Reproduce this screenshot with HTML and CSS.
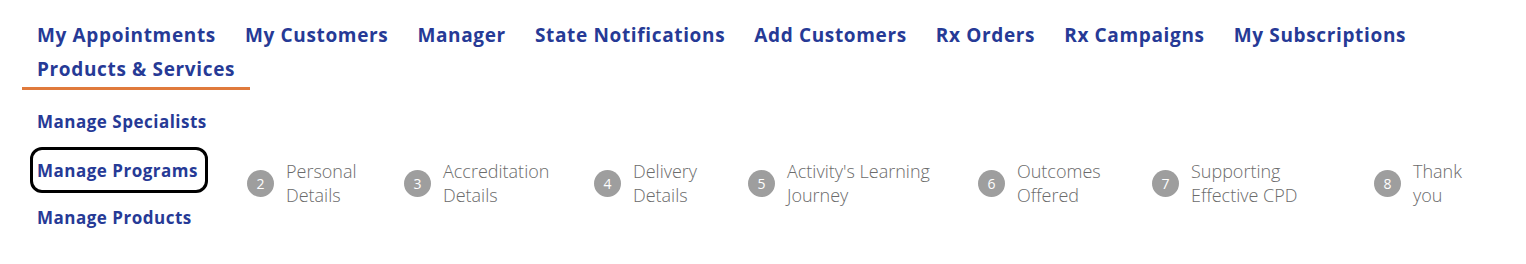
FILE: index.html
```html
<!DOCTYPE html>
<html>
<head>
    <title>Products &amp; Services</title>
    <link rel="stylesheet" href="styles.css">
</head>
<body>
    <ul class="nav">
        <li><a href="#">My Appointments</a></li>
        <li><a href="#">My Customers</a></li>
        <li><a href="#">Manager</a></li>
        <li><a href="#">State Notifications</a></li>
        <li><a href="#">Add Customers</a></li>
        <li><a href="#">Rx Orders</a></li>
        <li><a href="#">Rx Campaigns</a></li>
        <li><a href="#">My Subscriptions</a></li>
        <li class="active"><a href="#">Products &amp; Services</a></li>
    </ul>

    <ul class="submenu">
        <li><a href="#">Manage Specialists</a></li>
        <li class="current">
            <a href="#" class="selected">Manage Programs</a>
            <div class="steps">
                <div class="step"><span class="num">2</span><span class="label">Personal<br>Details</span></div>
                <div class="step"><span class="num">3</span><span class="label">Accreditation<br>Details</span></div>
                <div class="step"><span class="num">4</span><span class="label">Delivery<br>Details</span></div>
                <div class="step"><span class="num">5</span><span class="label">Activity's Learning<br>Journey</span></div>
                <div class="step"><span class="num">6</span><span class="label">Outcomes<br>Offered</span></div>
                <div class="step"><span class="num">7</span><span class="label">Supporting<br>Effective CPD</span></div>
                <div class="step"><span class="num">8</span><span class="label">Thank<br>you</span></div>
            </div>
        </li>
        <li><a href="#">Manage Products</a></li>
    </ul>
</body>
</html>
```

FILE: styles.css
```css
body {
    margin: 0;
    font-family: "Open Sans", Arial, sans-serif;
    background: #fff;
}

a {
    text-decoration: none;
    color: #263a96;
}

.nav {
    display: flex;
    flex-wrap: wrap;
    list-style: none;
    margin: 0;
    padding: 19px 0 0 22px;
    width: 1420px;
}

.nav li {
    padding: 0 14px 0 15px;
    line-height: 33px;
}

.nav a {
    font-size: 19px;
    font-weight: 700;
    letter-spacing: 0.65px;
}

.nav .active {
    padding-right: 15px;
    border-bottom: 3px solid #e07a3c;
}

.submenu {
    list-style: none;
    margin: 8px 0 0;
    padding: 0 0 0 37px;
}

.submenu li {
    display: flex;
    align-items: center;
    min-height: 48px;
}

.submenu .current {
    align-items: flex-start;
}

.submenu a {
    font-size: 17px;
    font-weight: 700;
    line-height: 24px;
    letter-spacing: 0.5px;
}

.submenu .selected {
    margin: 1px 0 0 -7px;
    padding: 9px 7px 7px 4px;
    border: 3px solid #000;
    border-radius: 12px;
}

.steps {
    display: grid;
    grid-template-columns: 157px 190px 154px 230px 174px 222px 110px;
    margin: 13px 0 -13px 39px;
}

.step {
    display: flex;
    align-items: center;
    gap: 12px;
}

.num {
    display: flex;
    align-items: center;
    justify-content: center;
    width: 27px;
    height: 27px;
    border-radius: 50%;
    background: #9e9e9e;
    color: #fff;
    font-size: 14px;
    flex-shrink: 0;
}

.label {
    font-size: 18px;
    font-weight: 300;
    line-height: 24px;
    color: #6b6b6b;
}
```
